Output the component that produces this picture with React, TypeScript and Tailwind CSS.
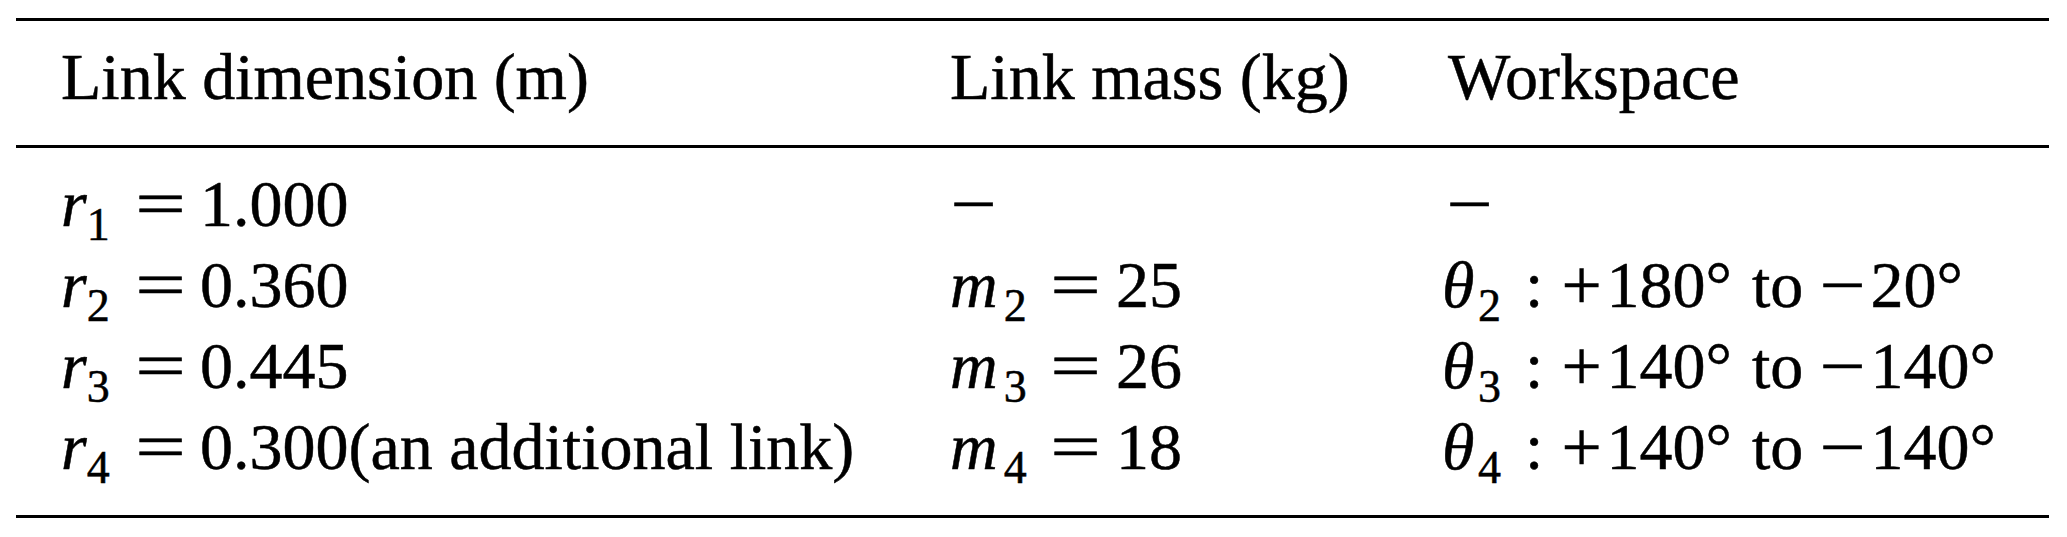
import React from 'react';

const Sub = ({ c }: { c: string }) => (
  <span className="text-[46px] leading-[0] align-[-14px]">{c}</span>
);

const Eq = ({ className }: { className: string }) => (
  <span className={`inline-block leading-none scale-x-[1.36] ${className}`}>=</span>
);

const Minus = ({ className }: { className: string }) => (
  <span className={`inline-block leading-none scale-x-[1.24] ${className}`}>−</span>
);

const Dim = ({ n, value }: { n: string; value: string }) => (
  <div>
    <span className="italic">r</span>
    <Sub c={n} />
    <Eq className="ml-[32px] mr-[21px]" />
    {value}
  </div>
);

const Mass = ({ n, value }: { n: string; value: string }) => (
  <div>
    <span className="italic">m</span>
    <span className="ml-[6px]">
      <Sub c={n} />
    </span>
    <Eq className="ml-[30px] mr-[22px]" />
    {value}
  </div>
);

const Range = ({ n, from, to }: { n: string; from: string; to: string }) => (
  <div className="whitespace-nowrap">
    <span className="inline-block -ml-[6px] w-[36px] italic">θ</span>
    <Sub c={n} />
    <span className="ml-[24px]">:</span>
    <span className="inline-block leading-none ml-[20px] scale-[1.08]">+</span>
    <span className="ml-[6px]">{from}°</span>
    <span className="ml-[20px]">to</span>
    <Minus className="ml-[21px]" />
    <span className="ml-[9px]">{to}°</span>
  </div>
);

const rows = [
  { r: '1', dim: '1.000', mass: null, range: null },
  { r: '2', dim: '0.360', mass: '25', range: ['180', '20'] },
  { r: '3', dim: '0.445', mass: '26', range: ['140', '140'] },
  { r: '4', dim: '0.300(an additional link)', mass: '18', range: ['140', '140'] },
];

export default function App() {
  return (
    <div className="w-[2067px] h-[537px] bg-white text-black font-['Liberation_Serif','Times_New_Roman',serif] text-[66px] leading-[81px] [-webkit-text-stroke:0.5px_#000]">
      <div className="ml-[16px] w-[2033px] pt-[18px]">
        <div className="border-t-[3px] border-black" />
        <div className="grid grid-cols-[889px_498px_1fr] pl-[45px] pt-[15px] pb-[28px]">
          <div>Link dimension (m)</div>
          <div>Link mass (kg)</div>
          <div>Workspace</div>
        </div>
        <div className="border-t-[3px] border-black" />
        <div className="grid grid-cols-[889px_498px_1fr] pl-[45px] pt-[15px] pb-[28px]">
          {rows.map((row) => (
            <React.Fragment key={row.r}>
              <Dim n={row.r} value={row.dim} />
              {row.mass ? (
                <Mass n={row.r} value={row.mass} />
              ) : (
                <div>
                  <Minus className="ml-[5px]" />
                </div>
              )}
              {row.range ? (
                <Range n={row.r} from={row.range[0]} to={row.range[1]} />
              ) : (
                <div>
                  <Minus className="ml-[3px]" />
                </div>
              )}
            </React.Fragment>
          ))}
        </div>
        <div className="border-t-[3px] border-black" />
      </div>
    </div>
  );
}
